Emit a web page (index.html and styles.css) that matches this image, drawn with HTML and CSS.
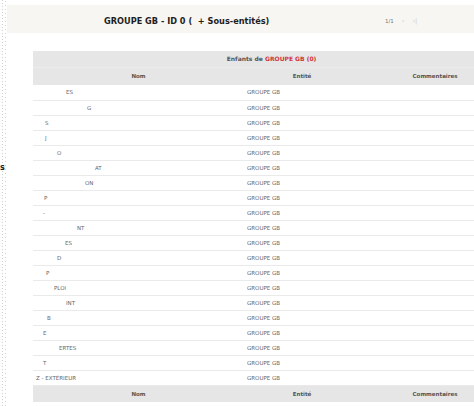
FILE: index.html
```html
<!DOCTYPE html>
<html>
<head>
<meta charset="utf-8">
<link rel="stylesheet" href="styles.css">
</head>
<body>
<div class="page">
  <div class="strip"><span class="cut">s</span></div>
  <div class="main">
    <div class="band">
      <div class="title">GROUPE GB - ID 0 (&nbsp; + Sous-entités)</div>
      <div class="pager"><span class="count">1/1</span><span class="arrow">›</span><span class="arrow">›|</span></div>
    </div>
    <table class="grid">
      <colgroup><col class="c-nom"><col class="c-ent"><col class="c-com"></colgroup>
      <thead>
        <tr class="cap"><th colspan="3">Enfants de <span class="red">GROUPE GB (0)</span></th></tr>
        <tr class="heads"><th>Nom</th><th>Entité</th><th>Commentaires</th></tr>
      </thead>
      <tbody>
        <tr><td style="padding-left:33px">ES</td><td>GROUPE GB</td><td></td></tr>
        <tr><td style="padding-left:54px">G</td><td>GROUPE GB</td><td></td></tr>
        <tr><td style="padding-left:12px">S</td><td>GROUPE GB</td><td></td></tr>
        <tr><td style="padding-left:12px">J</td><td>GROUPE GB</td><td></td></tr>
        <tr><td style="padding-left:24px">O</td><td>GROUPE GB</td><td></td></tr>
        <tr><td style="padding-left:62px">AT</td><td>GROUPE GB</td><td></td></tr>
        <tr><td style="padding-left:52px">ON</td><td>GROUPE GB</td><td></td></tr>
        <tr><td style="padding-left:11px">P</td><td>GROUPE GB</td><td></td></tr>
        <tr><td style="padding-left:10px">-</td><td>GROUPE GB</td><td></td></tr>
        <tr><td style="padding-left:44px">NT</td><td>GROUPE GB</td><td></td></tr>
        <tr><td style="padding-left:32px">ES</td><td>GROUPE GB</td><td></td></tr>
        <tr><td style="padding-left:24px">D</td><td>GROUPE GB</td><td></td></tr>
        <tr><td style="padding-left:13px">P</td><td>GROUPE GB</td><td></td></tr>
        <tr><td style="padding-left:21px">PLOI</td><td>GROUPE GB</td><td></td></tr>
        <tr><td style="padding-left:33px">INT</td><td>GROUPE GB</td><td></td></tr>
        <tr><td style="padding-left:14px">B</td><td>GROUPE GB</td><td></td></tr>
        <tr><td style="padding-left:10px">E</td><td>GROUPE GB</td><td></td></tr>
        <tr><td style="padding-left:26px">ERTES</td><td>GROUPE GB</td><td></td></tr>
        <tr><td style="padding-left:10px">T</td><td>GROUPE GB</td><td></td></tr>
        <tr><td style="padding-left:3px">Z - EXTÉRIEUR</td><td>GROUPE GB</td><td></td></tr>
      </tbody>
      <tfoot>
        <tr class="heads"><th>Nom</th><th>Entité</th><th>Commentaires</th></tr>
      </tfoot>
    </table>
  </div>
</div>
</body>
</html>
```

FILE: styles.css
```css
html, body {
  margin: 0;
  padding: 0;
  background: #fff;
  overflow: hidden;
  width: 474px;
  height: 406px;
}
body {
  font-family: "DejaVu Sans", Verdana, sans-serif;
  color: #555;
}
.page {
  display: flex;
  align-items: flex-start;
  width: 520px;
}
.strip {
  width: 7px;
  flex: none;
  height: 406px;
  background-image:
    repeating-linear-gradient(to bottom, #cfcfcf 0 1px, transparent 1px 3px),
    repeating-linear-gradient(to bottom, #e2c9cf 0 1px, transparent 1px 4px);
  background-size: 1px 100%, 1px 100%;
  background-position: 2px 0, 5px 1px;
  background-repeat: no-repeat;
  padding-top: 163px;
  box-sizing: border-box;
}
.cut {
  display: block;
  font-weight: bold;
  font-size: 8px;
  line-height: 10px;
  color: #222;
}
.main {
  flex: 1;
  padding-top: 5px;
}
.band {
  height: 28px;
  background: #f7f6f3;
  display: flex;
  align-items: center;
  padding-left: 97px;
  padding-top: 3px;
  box-sizing: border-box;
}
.title {
  font-weight: bold;
  font-size: 8.2px;
  color: #1e1e1e;
  width: 281px;
  white-space: nowrap;
}
.pager {
  display: flex;
  align-items: center;
  gap: 8px;
  font-size: 5.5px;
  color: #777;
}
.pager .arrow {
  color: #ccc;
  font-size: 6.5px;
}
.grid {
  margin-top: 18px;
  margin-left: 26px;
  width: 477px;
  table-layout: fixed;
  border-collapse: collapse;
  font-size: 5.5px;
}
.c-nom { width: 211px; }
.c-ent { width: 116px; }
.c-com { width: 150px; }
.grid th {
  background: #e6e6e6;
  font-weight: bold;
  color: #555;
  padding: 0;
  text-align: center;
}
.cap th {
  height: 16px;
  font-size: 6px;
  border-bottom: 1px solid #ececec;
  box-sizing: border-box;
}
.red { color: #d0343a; }
.heads th {
  height: 18px;
  box-sizing: border-box;
}
.grid td {
  height: 15px;
  box-sizing: border-box;
  padding: 0 0 0 3px;
  border-bottom: 1px solid #eaeaea;
  color: #666;
  white-space: nowrap;
  overflow: hidden;
}
tfoot .heads th {
  height: 17px;
}
```
